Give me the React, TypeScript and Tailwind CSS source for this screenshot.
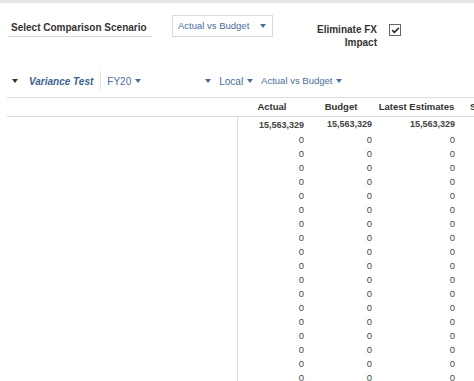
import { Check } from "lucide-react";

const Caret = ({ className = "" }: { className?: string }) => (
  <svg width="6" height="4" viewBox="0 0 6 4" className={className}>
    <path d="M0 0 L6 0 L3 4 Z" fill="currentColor" />
  </svg>
);

const zeroRows = Array.from({ length: 18 });

const App = () => {
  return (
    <div
      className="w-[474px] h-[381px] overflow-hidden bg-white border-t-[3px] border-[#e6e6e6] text-[#333] whitespace-nowrap"
      style={{ fontFamily: '"Liberation Sans", Arial, sans-serif' }}
    >
      {/* scenario selector */}
      <div className="flex items-start h-[50px]">
        <div className="mt-[17px] ml-[8px] w-[144px] pl-[3px] pb-[1px] border-b border-[#d6d6d6] text-[10px] font-bold leading-[15px]">
          Select Comparison Scenario
        </div>
        <div className="mt-[12px] ml-[20px] h-[22px] w-[101px] border border-[#dadada] pl-[5px] pr-[6px] flex items-center justify-between text-[9.5px] text-[#4a6d9c]">
          <span>Actual vs Budget</span>
          <Caret className="text-[#4a6d9c]" />
        </div>
        <div className="mt-[20px] ml-[43px] w-[61px] text-right text-[10px] font-bold leading-[13px]">
          Eliminate FX
          <br />
          Impact
        </div>
        <div className="mt-[21px] ml-[12px] w-[12px] h-[12px] border border-[#666] flex items-center justify-center">
          <Check className="w-[9px] h-[9px] text-[#222]" strokeWidth={4} />
        </div>
      </div>

      {/* toolbar */}
      <div className="flex items-center h-[44px] pt-[12px] pl-[12px] text-[10px] text-[#4a6d9c]">
        <Caret className="text-[#333]" />
        <span className="ml-[11px] italic font-bold text-[#3b6190]">Variance Test</span>
        <div className="ml-[7px] w-px h-[20px] bg-[#e2e2e2]" />
        <span className="ml-[6px]">FY20</span>
        <Caret className="ml-[4px]" />
        <Caret className="ml-[64px]" />
        <span className="ml-[8px]">Local</span>
        <Caret className="ml-[4px]" />
        <span className="ml-[8px] text-[9.5px]">Actual vs Budget</span>
        <Caret className="ml-[4px]" />
      </div>

      {/* table */}
      <div className="ml-[7px]">
        <div className="flex h-[20px] items-center border-t border-b border-[#dcdcdc] text-[9.5px] font-bold">
          <div className="w-[230px] shrink-0" />
          <div className="w-[70px] shrink-0 text-center">Actual</div>
          <div className="w-[68px] shrink-0 text-center">Budget</div>
          <div className="w-[83px] shrink-0 text-center">Latest Estimates</div>
          <div className="pl-[12px]">Scenario</div>
        </div>
        <div className="flex h-[16px] items-center text-[9px] font-bold text-[#444]">
          <div className="w-[230px] shrink-0" />
          <div className="w-[70px] shrink-0 h-full border-l border-[#dcdcdc] pr-[3px] text-right leading-[16px]">15,563,329</div>
          <div className="w-[68px] shrink-0 pr-[3px] text-right">15,563,329</div>
          <div className="w-[83px] shrink-0 pr-[3px] text-right">15,563,329</div>
        </div>
        {zeroRows.map((_, i) => (
          <div key={i} className="flex h-[14px] items-center text-[9.5px] text-[#4a4a4a]">
            <div className="w-[230px] shrink-0" />
            <div className="w-[70px] shrink-0 h-full border-l border-[#dcdcdc] pr-[3px] text-right leading-[14px]">0</div>
            <div className="w-[68px] shrink-0 pr-[3px] text-right">0</div>
            <div className="w-[83px] shrink-0 pr-[3px] text-right">0</div>
          </div>
        ))}
      </div>
    </div>
  );
};

export default App;
